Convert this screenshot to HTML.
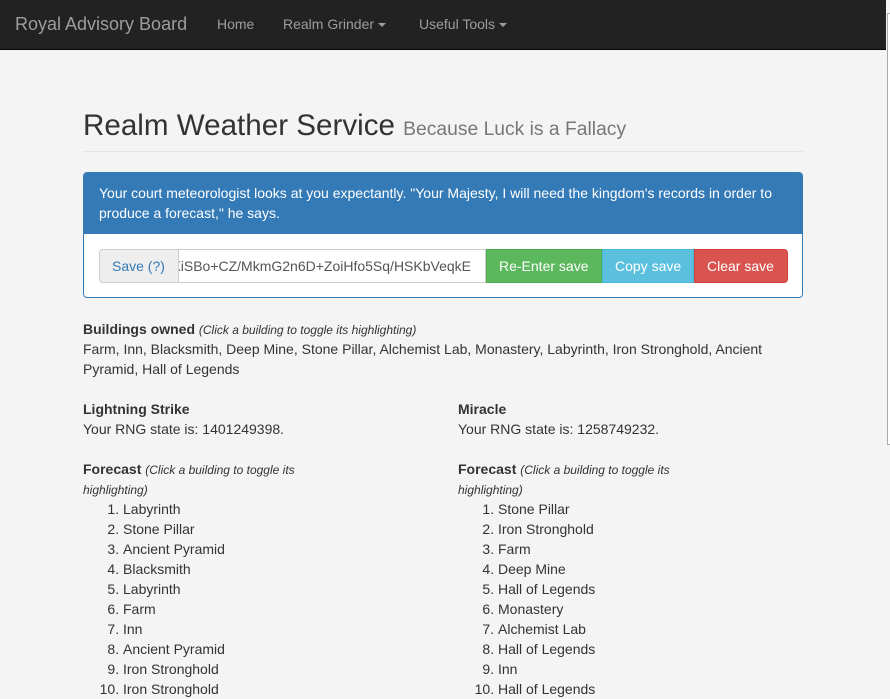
<!DOCTYPE html>
<html><head><style>
*{box-sizing:border-box}
body{margin:0;background:#f4f4f4;font-family:"Liberation Sans",sans-serif;font-size:14px;line-height:20px;color:#333;width:890px;height:699px;overflow:hidden;position:relative}
.nav{height:50px;background:#222;border-bottom:1px solid #080808;position:relative;width:886px}
.nav span{position:absolute;top:14px;color:#9d9d9d;font-size:14px}
.brand{font-size:18px!important;left:15px}
.caret{display:inline-block;width:0;height:0;border-top:4px solid #9d9d9d;border-left:4px solid transparent;border-right:4px solid transparent;vertical-align:middle;margin-left:4px}
.strip{position:absolute;left:886px;top:0;width:4px;height:699px;background:#f4f4f4}
.strip div{position:absolute;left:1px;top:13px;width:3px;height:432px;background:#fff;border-left:1px solid #aaa;border-top:1px solid #aaa;border-bottom:1px solid #aaa}
.c{position:absolute;left:83px;width:720px}
h1{position:absolute;left:83px;top:108px;margin:0;font-size:29.6px;font-weight:500;line-height:36px;color:#333;width:720px;border-bottom:1px solid #e5e5e5;height:44px;white-space:nowrap}
h1 small{font-size:19.3px;color:#777}
.panel{top:172px;height:126px;border:1px solid #337ab7;border-radius:4px;background:#fff;overflow:hidden}
.ph{background:#337ab7;color:#fff;padding:10px 15px;height:61px}
.ig{position:absolute;left:15px;top:76px;height:34px;display:flex;font-size:14px}
.ig div{height:34px;line-height:32px;padding:0 12px;border:1px solid;white-space:nowrap}
.b{font-weight:bold}
ol{margin:0;padding-left:40px}
.col{position:absolute}
i.s{font-size:12px;line-height:1}
</style></head><body>
<div class="nav"><span class="brand">Royal Advisory Board</span><span style="left:217px">Home</span><span style="left:283px">Realm Grinder<i class="caret"></i></span><span style="left:419px">Useful Tools<i class="caret"></i></span></div>
<div class="strip"><div></div></div>
<h1>Realm Weather Service <small>Because Luck is a Fallacy</small></h1>
<div class="c panel"><div class="ph">Your court meteorologist looks at you expectantly. "Your Majesty, I will need the kingdom's records in order to produce a forecast," he says.</div>
<div class="ig">
<div style="width:80px;background:#eee;border-color:#ccc;color:#337ab7;border-radius:4px 0 0 4px">Save (?)</div>
<div style="width:307px;background:#fff;border-color:#ccc;border-left:0;overflow:hidden;direction:rtl;color:#555;padding:0 14px 0 0">dkSf0+XiSBo+CZ/MkmG2n6D+ZoiHfo5Sq/HSKbVeqkE</div>
<div style="width:116px;background:#5cb85c;border-color:#4cae4c;color:#fff">Re-Enter save</div>
<div style="width:92px;background:#5bc0de;border-color:#46b8da;color:#fff">Copy save</div>
<div style="width:94px;background:#d9534f;border-color:#d43f3a;color:#fff;border-radius:0 4px 4px 0">Clear save</div>
</div></div>
<div class="c" style="top:319px"><span class="b">Buildings owned</span> <i class="s">(Click a building to toggle its highlighting)</i><br>Farm, Inn, Blacksmith, Deep Mine, Stone Pillar, Alchemist Lab, Monastery, Labyrinth, Iron Stronghold, Ancient Pyramid, Hall of Legends</div>
<div class="col" style="left:83px;top:399px;width:360px"><span class="b">Lightning Strike</span><br>Your RNG state is: 1401249398.<br><br><div style="width:230px"><span class="b">Forecast</span> <i class="s">(Click a building to toggle its highlighting)</i></div>
<ol><li>Labyrinth</li><li>Stone Pillar</li><li>Ancient Pyramid</li><li>Blacksmith</li><li>Labyrinth</li><li>Farm</li><li>Inn</li><li>Ancient Pyramid</li><li>Iron Stronghold</li><li>Iron Stronghold</li></ol></div>
<div class="col" style="left:458px;top:399px;width:360px"><span class="b">Miracle</span><br>Your RNG state is: 1258749232.<br><br><div style="width:230px"><span class="b">Forecast</span> <i class="s">(Click a building to toggle its highlighting)</i></div>
<ol><li>Stone Pillar</li><li>Iron Stronghold</li><li>Farm</li><li>Deep Mine</li><li>Hall of Legends</li><li>Monastery</li><li>Alchemist Lab</li><li>Hall of Legends</li><li>Inn</li><li>Hall of Legends</li></ol></div>
</body></html>
